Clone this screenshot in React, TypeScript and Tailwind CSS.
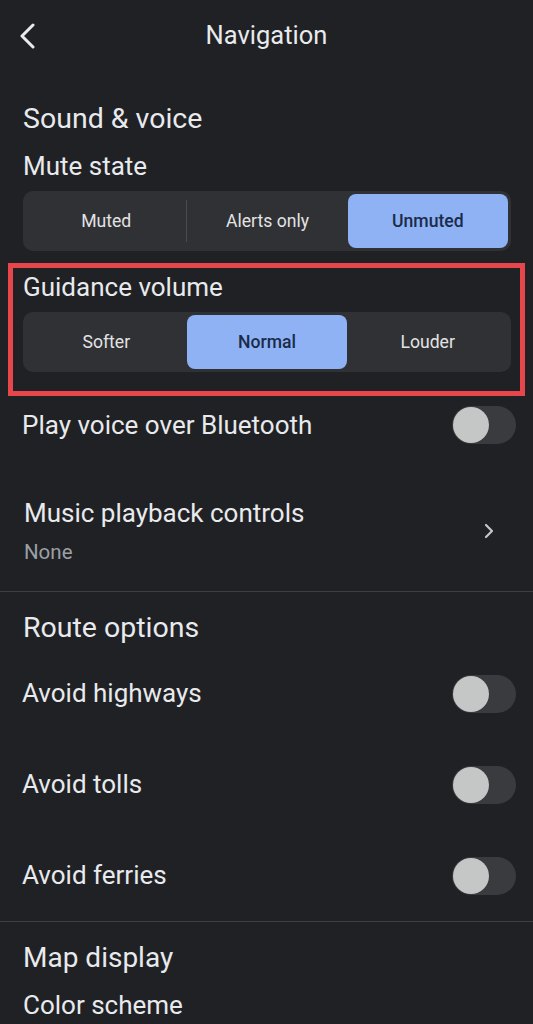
import React from "react";

const font = { fontFamily: "Roboto, 'Noto Sans', sans-serif" };

function Toggle() {
  return (
    <div className="w-[64px] h-[38px] rounded-full bg-[#3a3b3f] flex items-center pl-[1px]">
      <div className="w-[36px] h-[36px] rounded-full bg-[#c4c7c5]" />
    </div>
  );
}

function Segmented({ items, selected, dividerAfter }: { items: string[]; selected: number; dividerAfter?: number }) {
  return (
    <div className="h-[60px] rounded-[10px] bg-[#303135] flex items-stretch p-[3px]">
      {items.map((it, i) => (
        <React.Fragment key={it}>
          <div
            className={
              "flex-1 flex items-center justify-center rounded-[8px] text-[17.6px] " +
              (i === selected ? "bg-[#8fb2f4] text-[#1b2b4b] font-medium" : "text-[#e3e3e3]")
            }
          >
            {it}
          </div>
          {dividerAfter === i && <div className="w-px bg-[#4a4b4f] my-[6px]" />}
        </React.Fragment>
      ))}
    </div>
  );
}

function ToggleRow({ label }: { label: string }) {
  return (
    <div className="h-[91px] flex items-center justify-between pl-[22px] pr-[17px]">
      <span className="text-[26px] text-[#e8eaed]">{label}</span>
      <Toggle />
    </div>
  );
}

export default function App() {
  return (
    <div className="w-[533px] h-[1024px] bg-[#202124] text-[#e8eaed] overflow-hidden" style={font}>
      {/* header */}
      <div className="h-[72px] flex items-center px-[18px]">
        <svg width="20" height="26" viewBox="0 0 20 26" className="shrink-0">
          <path d="M15 2 L4 13 L15 24" fill="none" stroke="#e8eaed" strokeWidth="3" strokeLinecap="round" strokeLinejoin="round" />
        </svg>
        <div className="flex-1 text-center text-[25.5px] leading-none">Navigation</div>
        <div className="w-[20px] shrink-0" />
      </div>

      <div className="mt-[24px] h-[46px] flex items-center px-[23px] text-[28.5px]">Sound &amp; voice</div>
      <div className="h-[48px] flex items-center px-[23px] text-[26px]">Mute state</div>
      <div className="mt-[1px] px-[23px] pr-[22px]">
        <Segmented items={["Muted", "Alerts only", "Unmuted"]} selected={2} dividerAfter={0} />
      </div>

      <div className="mt-[12px] mx-[8px] border-[5px] border-[#e8464d] h-[133px] px-[10px] pr-[9px]">
        <div className="h-[38px] flex items-center text-[26px]">Guidance volume</div>
        <div className="mt-[6px]">
          <Segmented items={["Softer", "Normal", "Louder"]} selected={1} />
        </div>
      </div>

      <div className="h-[58px] flex items-center justify-between pl-[22px] pr-[17px]">
        <span className="text-[26px]">Play voice over Bluetooth</span>
        <Toggle />
      </div>

      <div className="h-[137px] flex items-center justify-between pl-[24px] pr-[38px] pt-[16px]">
        <div className="flex flex-col">
          <span className="text-[26px] leading-[34px]">Music playback controls</span>
          <span className="mt-[8px] text-[20.5px] leading-[28px] text-[#9aa0a6]">None</span>
        </div>
        <svg width="12" height="18" viewBox="0 0 12 18">
          <path d="M3 3 L9 9 L3 15" fill="none" stroke="#c4c7c5" strokeWidth="2.2" strokeLinecap="round" strokeLinejoin="round" />
        </svg>
      </div>

      <div className="h-px bg-[#3c4043]" />

      <div className="h-[56px] pt-[20px] px-[23px] text-[28.5px] leading-[32px]">Route options</div>
      <ToggleRow label="Avoid highways" />
      <ToggleRow label="Avoid tolls" />
      <ToggleRow label="Avoid ferries" />

      <div className="h-px bg-[#3c4043]" />

      <div className="pt-[20px] px-[23px] text-[28px] leading-[32px]">Map display</div>
      <div className="mt-[15px] px-[23px] text-[26px] leading-[32px]">Color scheme</div>
    </div>
  );
}
